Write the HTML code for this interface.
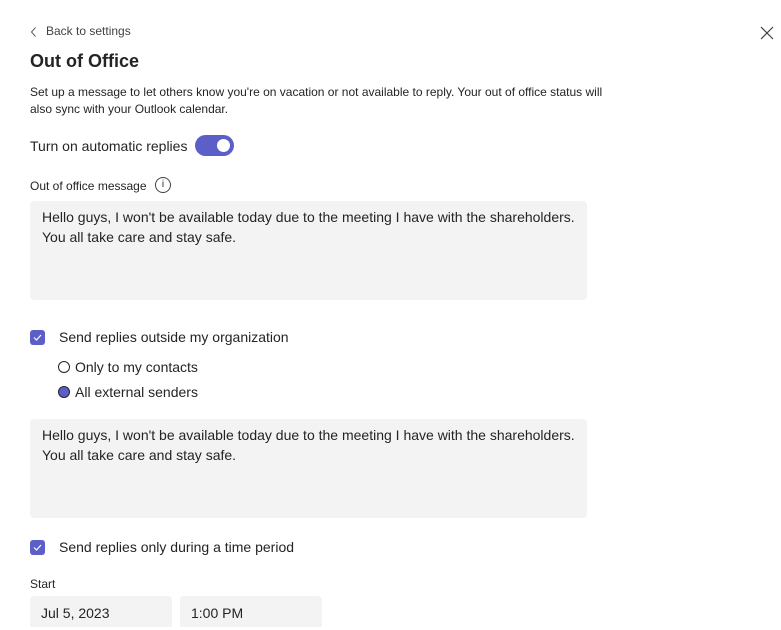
<!DOCTYPE html>
<html><head><style>
body{margin:0;width:781px;height:627px;overflow:hidden;background:#fff;font-family:"Liberation Sans",sans-serif;color:#242424;position:relative}
.a{position:absolute;white-space:nowrap}
.ta{position:absolute;left:30px;width:557px;height:99px;background:#f3f3f3;border-radius:4px;font-size:14px;line-height:20px;padding:5px 12px;box-sizing:border-box}
.cb{position:absolute;left:30px;width:15px;height:15px;background:#5b5fc7;border-radius:3px}
.in{position:absolute;top:596px;height:31px;width:142px;background:#f3f3f3;border-radius:4px 4px 0 0;font-size:14px;line-height:34px;padding-left:11px;box-sizing:border-box}
</style></head><body>
<svg class="a" style="left:29px;top:26px" width="10" height="12"><path d="M6.5 1.5 L2.5 6 L6.5 10.5" fill="none" stroke="#616161" stroke-width="1"/></svg>
<div class="a" style="left:46px;top:24px;font-size:12px;color:#424242">Back to settings</div>
<svg class="a" style="left:760px;top:26px" width="14" height="14"><path d="M1 1 L13 13 M13 1 L1 13" stroke="#424242" stroke-width="1.2"/></svg>
<div class="a" style="left:30px;top:51px;font-size:18px;font-weight:bold">Out of Office</div>
<div class="a" style="left:30px;top:84px;font-size:12px;line-height:17px">Set up a message to let others know you're on vacation or not available to reply. Your out of office status will<br>also sync with your Outlook calendar.</div>
<div class="a" style="left:30px;top:138px;font-size:14px">Turn on automatic replies</div>
<div class="a" style="left:195px;top:135px;width:39px;height:21px;border-radius:11px;background:#5b5fc7"><div style="position:absolute;right:4px;top:4px;width:13px;height:13px;border-radius:50%;background:#fff"></div></div>
<div class="a" style="left:30px;top:179px;font-size:12px">Out of office message</div>
<div class="a" style="left:155px;top:177px;width:14px;height:14px;border:1px solid #424242;border-radius:50%;font-size:10px;line-height:14px;text-align:center">i</div>
<div class="ta" style="top:201px;padding-top:6px">Hello guys, I won't be available today due to the meeting I have with the shareholders.<br>You all take care and stay safe.</div>
<div class="cb" style="top:330px"><svg width="15" height="15"><path d="M4 7.5 L6.5 10 L11 5" fill="none" stroke="#fff" stroke-width="1.2"/></svg></div>
<div class="a" style="left:59px;top:329px;font-size:14px">Send replies outside my organization</div>
<div class="a" style="left:58px;top:361px;width:10px;height:10px;border:1px solid #242424;border-radius:50%"></div>
<div class="a" style="left:75px;top:359px;font-size:14px">Only to my contacts</div>
<div class="a" style="left:58px;top:386px;width:10px;height:10px;border:1px solid #242424;border-radius:50%;background:#5b5fc7"></div>
<div class="a" style="left:75px;top:384px;font-size:14px">All external senders</div>
<div class="ta" style="top:419px;padding-top:6px">Hello guys, I won't be available today due to the meeting I have with the shareholders.<br>You all take care and stay safe.</div>
<div class="cb" style="top:540px"><svg width="15" height="15"><path d="M4 7.5 L6.5 10 L11 5" fill="none" stroke="#fff" stroke-width="1.2"/></svg></div>
<div class="a" style="left:59px;top:539px;font-size:14px">Send replies only during a time period</div>
<div class="a" style="left:30px;top:577px;font-size:12px">Start</div>
<div class="in" style="left:30px">Jul 5, 2023</div>
<div class="in" style="left:180px">1:00 PM</div>
</body></html>
